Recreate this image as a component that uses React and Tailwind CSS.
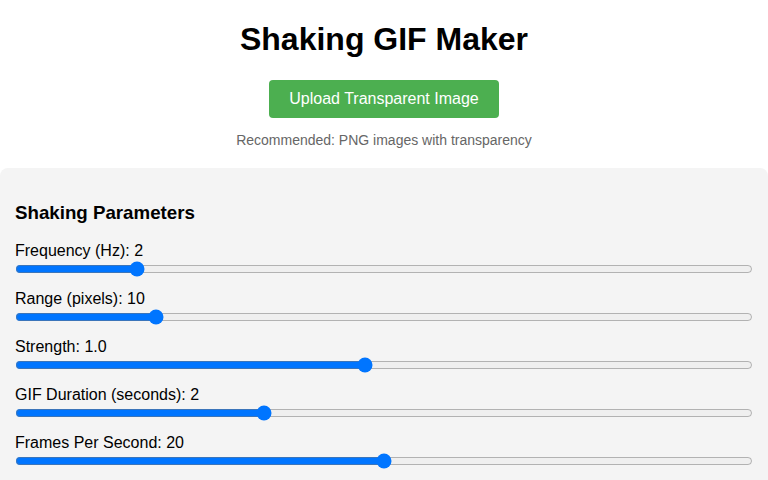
import { useState } from "react";

function Slider({ label, value, min, max, step, onChange, format }) {
  return (
    <div className="mb-[13px]">
      <label className="block text-[16px] text-black">
        {label}: {format ? format(value) : value}
      </label>
      <input
        type="range"
        min={min}
        max={max}
        step={step}
        value={value}
        onChange={(e) => onChange(parseFloat(e.target.value))}
        className="block w-full mt-[1px] mb-[2px]"
      />
    </div>
  );
}

export default function App() {
  const [frequency, setFrequency] = useState(2);
  const [range, setRange] = useState(10);
  const [strength, setStrength] = useState(1);
  const [duration, setDuration] = useState(2);
  const [fps, setFps] = useState(20);

  return (
    <div className="min-h-screen bg-white font-['Liberation_Sans',Arial,sans-serif] text-black leading-[normal]">
      <div className="text-center mb-[20px]">
        <h1 className="text-[32px] font-bold my-[21.44px]">Shaking GIF Maker</h1>
        <button className="bg-[#4caf50] text-white text-[16px] px-[20px] py-[10px] rounded-[4px] leading-[18px]">
          Upload Transparent Image
        </button>
        <p className="text-[14px] text-[#666] mt-[14px]">
          Recommended: PNG images with transparency
        </p>
      </div>

      <div className="bg-[#f4f4f4] rounded-[8px] p-[15px]">
        <h3 className="text-[18.72px] font-bold my-[18.72px]">Shaking Parameters</h3>
        <Slider label="Frequency (Hz)" value={frequency} min={0.5} max={10} step={0.5} onChange={setFrequency} />
        <Slider label="Range (pixels)" value={range} min={1} max={50} step={1} onChange={setRange} />
        <Slider label="Strength" value={strength} min={0.1} max={2} step={0.1} onChange={setStrength} format={(v) => v.toFixed(1)} />
        <Slider label="GIF Duration (seconds)" value={duration} min={1} max={4} step={1} onChange={setDuration} />
        <Slider label="Frames Per Second" value={fps} min={10} max={30} step={1} onChange={setFps} />
      </div>
    </div>
  );
}
